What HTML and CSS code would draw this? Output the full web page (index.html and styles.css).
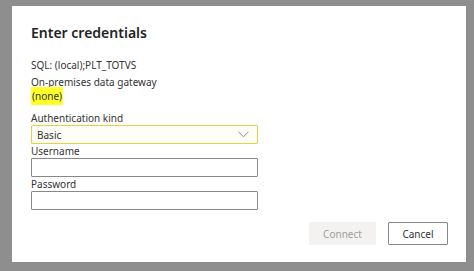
FILE: index.html
```html
<!DOCTYPE html>
<html lang="en">
<head>
    <meta charset="UTF-8">
    <title>Enter credentials</title>
    <link rel="stylesheet" href="styles.css">
</head>
<body>
    <div class="dialog">
        <h2>Enter credentials</h2>
        <p class="source">SQL: (local);PLT_TOTVS</p>
        <p class="gateway">On-premises data gateway</p>
        <p class="none"><span class="mark">(none)</span></p>

        <label class="label">Authentication kind</label>
        <div class="select">
            <span>Basic</span>
            <svg width="11" height="7" viewBox="0 0 11 7"><path d="M0.5 0.8 L5.5 5.8 L10.5 0.8" fill="none" stroke="#8a8a8a" stroke-width="1"/></svg>
        </div>

        <label class="label">Username</label>
        <div class="input"></div>

        <label class="label">Password</label>
        <div class="input"></div>

        <div class="buttons">
            <button class="btn connect">Connect</button>
            <button class="btn cancel">Cancel</button>
        </div>
    </div>
</body>
</html>
```

FILE: styles.css
```css
body {
    margin: 0;
    height: 271px;
    background-color: #8e8e8e;
    font-family: "Noto Sans", "Open Sans", sans-serif;
    color: #333;
    overflow: hidden;
}
.dialog {
    margin: 6px 0 0 12px;
    width: 454px;
    height: 256px;
    background-color: #fff;
    box-sizing: border-box;
    padding: 17px 0 0 19px;
    display: flex;
    flex-direction: column;
}
h2 {
    margin: 0 0 15px;
    font-size: 14px;
    font-weight: 600;
    line-height: 20px;
    color: #252423;
}
p {
    margin: 0;
    font-size: 10px;
    line-height: 14px;
}
.source {
    margin-bottom: 3px;
}
.mark {
    background-color: #ffff29;
    padding: 2px 1px;
}
.none {
    margin-bottom: 9px;
}
.label {
    font-size: 10px;
    line-height: 13px;
}
.select, .input {
    width: 227px;
    height: 19px;
    box-sizing: border-box;
    border: 1px solid #8a8886;
    border-radius: 1px;
    margin-bottom: 1px;
}
.select {
    border-color: #e3d24a;
    background-color: #fffef6;
    display: flex;
    align-items: center;
    justify-content: space-between;
    padding: 0 8px 0 5px;
    font-size: 10px;
}
.buttons {
    display: flex;
    justify-content: flex-end;
    gap: 12px;
    margin: 11px 18px 0 0;
}
.btn {
    height: 23px;
    font-family: inherit;
    font-size: 10px;
    border-radius: 1px;
}
.connect {
    width: 67px;
    background-color: #f3f2f1;
    border: 1px solid #f3f2f1;
    color: #a19f9d;
}
.cancel {
    width: 60px;
    background-color: #fff;
    border: 1px solid #8a8886;
    color: #323130;
}
```
